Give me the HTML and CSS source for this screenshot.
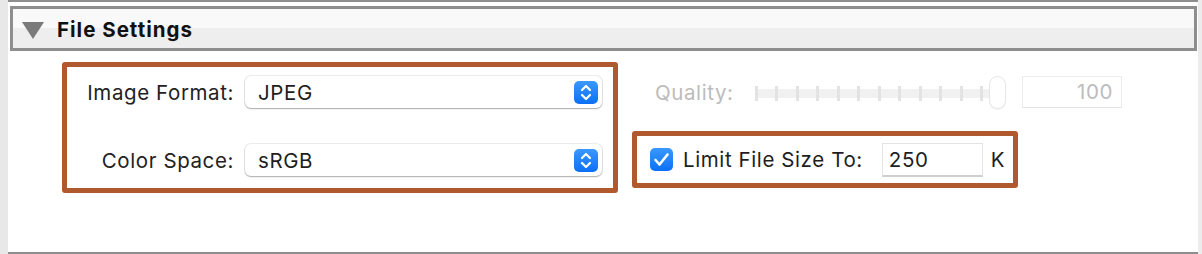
FILE: index.html
```html
<!DOCTYPE html>
<html>
<head>
<meta charset="utf-8">
<link rel="stylesheet" href="styles.css">
</head>
<body>
<div class="page">
  <div class="strip-left"></div>
  <div class="main">
    <div class="header">
      <span class="disclosure"></span>
      <span class="title">File Settings</span>
    </div>
    <div class="content">
      <div class="box box-left">
        <div class="label">Image Format:</div>
        <div class="popup"><span class="popup-text">JPEG</span>
          <span class="stepper"><svg width="24" height="23" viewBox="0 0 24 23"><path d="M8 9 L12 5 L16 9 M8 14 L12 18 L16 14" fill="none" stroke="#fff" stroke-width="2.2" stroke-linecap="round" stroke-linejoin="round"/></svg></span>
        </div>
        <div class="label">Color Space:</div>
        <div class="popup"><span class="popup-text">sRGB</span>
          <span class="stepper"><svg width="24" height="23" viewBox="0 0 24 23"><path d="M8 9 L12 5 L16 9 M8 14 L12 18 L16 14" fill="none" stroke="#fff" stroke-width="2.2" stroke-linecap="round" stroke-linejoin="round"/></svg></span>
        </div>
      </div>
      <div class="right-col">
        <div class="quality-row">
          <span class="quality-label">Quality:</span>
          <div class="slider">
            <div class="track"></div>
            <div class="ticks">
              <i></i><i></i><i></i><i></i><i></i><i></i><i></i><i></i><i></i><i></i><i></i><i></i>
            </div>
            <div class="knob"></div>
          </div>
          <div class="num-field">100</div>
        </div>
        <div class="box box-limit">
          <span class="checkbox"><svg width="23" height="23" viewBox="0 0 23 23"><path d="M5.5 12 L9.5 16.5 L17.5 6.5" fill="none" stroke="#fff" stroke-width="2.6" stroke-linecap="round" stroke-linejoin="round"/></svg></span>
          <span class="limit-label">Limit File Size To:</span>
          <div class="text-field">250</div>
          <span class="unit">K</span>
        </div>
      </div>
    </div>
  </div>
  <div class="strip-right"></div>
</div>
</body>
</html>
```

FILE: styles.css
```css
html, body {
  margin: 0;
  padding: 0;
  background: #ffffff;
}
body {
  font-family: "Inter", "Liberation Sans", sans-serif;
  color: #1e1e1e;
}
.page {
  display: flex;
  width: 1202px;
  height: 254px;
}
.strip-left {
  width: 8px;
  background: #e8e8e8;
}
.strip-right {
  width: 4px;
  background: #ececec;
}
.main {
  flex: 1;
  height: 246px;
  border-top: 2px solid #8e8e8e;
  border-bottom: 2px solid #8e8e8e;
  background: #fff;
  padding: 4px 1px 0 2px;
}
.header {
  height: 39px;
  border: 3px solid #8e8e8e;
  background: linear-gradient(#f9f9f9 0, #f9f9f9 50%, #eeeeee 50%, #eeeeee 100%);
  display: flex;
  align-items: center;
}
.disclosure {
  width: 0;
  height: 0;
  border-left: 11px solid transparent;
  border-right: 11px solid transparent;
  border-top: 17px solid #7a7a7a;
  margin-left: 9px;
  margin-top: 3px;
}
.title {
  font-weight: 700;
  font-size: 20.5px;
  letter-spacing: 1px;
  margin-left: 13px;
  color: #111;
  margin-top: 1px;
}
.content {
  display: flex;
  padding: 11px 0 0 52px;
  gap: 14px;
}
.box {
  border: 5px solid #b0592f;
  border-radius: 3px;
  box-sizing: border-box;
}
.box-left {
  width: 556px;
  height: 131px;
  display: grid;
  grid-template-columns: 166px 357px;
  column-gap: 12px;
  row-gap: 36px;
  padding: 9px 11px 0 0;
  align-items: center;
  align-content: start;
}
.label, .popup-text, .quality-label, .num-field, .limit-label, .text-field, .unit {
  font-size: 20.5px;
  letter-spacing: 0.6px;
}
.label {
  text-align: right;
  color: #222;
  margin-right: -1px;
}
.popup {
  height: 32px;
  background: #fff;
  border-radius: 6px;
  box-shadow: 0 0 0 1px rgba(0,0,0,0.07), 0 1px 1.5px rgba(0,0,0,0.28);
  display: flex;
  align-items: center;
  justify-content: space-between;
  padding: 0 4px 0 13px;
}
.popup-text {
  color: #1e1e1e;
}
.stepper {
  width: 24px;
  height: 23px;
  border-radius: 5px;
  background: linear-gradient(#3a98ff, #0c70f6);
  display: flex;
}
.right-col {
  display: flex;
  flex-direction: column;
}
.quality-row {
  margin-top: 14px;
  height: 32px;
  display: flex;
  align-items: center;
  padding-left: 23px;
}
.quality-label {
  color: #bcbcbc;
  width: 100px;
}
.slider {
  position: relative;
  width: 252px;
  height: 33px;
}
.track {
  position: absolute;
  left: 0;
  right: 10px;
  top: 13px;
  height: 9px;
  background: #f1f1f1;
  border-radius: 2px;
}
.ticks {
  position: absolute;
  left: 0;
  top: 10px;
  width: 228px;
  display: flex;
  justify-content: space-between;
}
.ticks i {
  display: block;
  width: 3px;
  height: 15px;
  background: #e3e3e3;
}
.knob {
  position: absolute;
  left: 234px;
  top: 0;
  width: 15px;
  height: 31px;
  border-radius: 9px;
  background: #fff;
  border: 1px solid #e6e6e6;
  box-shadow: 0 1px 1px rgba(0,0,0,0.06);
}
.num-field {
  margin-left: 15px;
  width: 100px;
  height: 32px;
  box-sizing: border-box;
  border: 1px solid #ededed;
  border-bottom-color: #e2e2e2;
  color: #bcbcbc;
  text-align: right;
  padding-right: 8px;
  line-height: 30px;
}
.box-limit {
  margin-top: 23px;
  width: 386px;
  height: 57px;
  display: flex;
  align-items: center;
  padding-left: 13px;
}
.checkbox {
  width: 23px;
  height: 23px;
  border-radius: 5px;
  background: linear-gradient(#3a98ff, #0c70f6);
  display: flex;
}
.limit-label {
  margin-left: 10px;
  color: #1e1e1e;
}
.text-field {
  margin-left: 19px;
  width: 101px;
  height: 34px;
  box-sizing: border-box;
  border: 1px solid #e4e4e4;
  border-bottom: 2px solid #cfcfcf;
  line-height: 31px;
  padding-left: 6px;
  color: #1e1e1e;
}
.unit {
  margin-left: 8px;
  color: #1e1e1e;
}
```
